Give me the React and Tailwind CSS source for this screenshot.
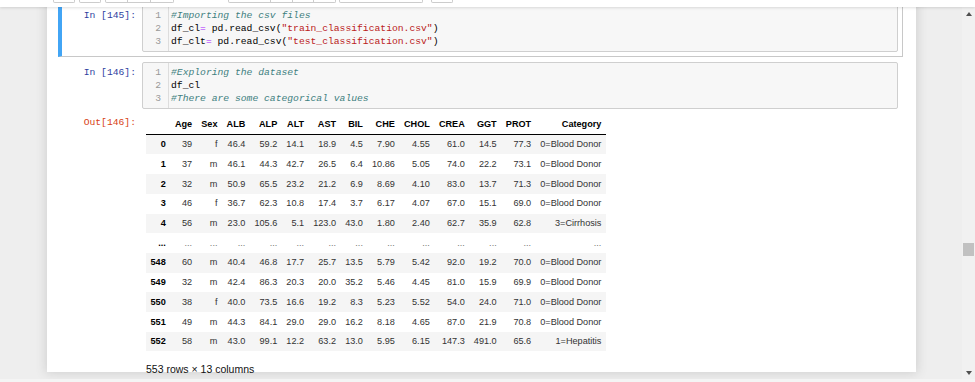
const toolbar = [
  { cls: "ml-[53px] w-[22px] rounded-b-[2px]" },
  { cls: "ml-[4px] w-[22px] rounded-b-[2px]" },
  { cls: "ml-[4px] w-[23px] rounded-bl-[2px]" },
  { cls: "-ml-px w-[24px]" },
  { cls: "-ml-px w-[24px] rounded-br-[2px]" },
  { cls: "ml-[54px] w-[43px] rounded-bl-[2px]" },
  { cls: "-ml-px w-[23px]" },
  { cls: "-ml-px w-[22px]" },
  { cls: "-ml-px w-[23px] rounded-br-[2px]" },
  { cls: "ml-[3px] w-[84px] rounded-b-[2px]" },
  { cls: "ml-[8px] w-[22px] rounded-b-[2px]" },
];

const columns = ["Age", "Sex", "ALB", "ALP", "ALT", "AST", "BIL", "CHE", "CHOL", "CREA", "GGT", "PROT", "Category"];

const rows = [
  ["0", "39", "f", "46.4", "59.2", "14.1", "18.9", "4.5", "7.90", "4.55", "61.0", "14.5", "77.3", "0=Blood Donor"],
  ["1", "37", "m", "46.1", "44.3", "42.7", "26.5", "6.4", "10.86", "5.05", "74.0", "22.2", "73.1", "0=Blood Donor"],
  ["2", "32", "m", "50.9", "65.5", "23.2", "21.2", "6.9", "8.69", "4.10", "83.0", "13.7", "71.3", "0=Blood Donor"],
  ["3", "46", "f", "36.7", "62.3", "10.8", "17.4", "3.7", "6.17", "4.07", "67.0", "15.1", "69.0", "0=Blood Donor"],
  ["4", "56", "m", "23.0", "105.6", "5.1", "123.0", "43.0", "1.80", "2.40", "62.7", "35.9", "62.8", "3=Cirrhosis"],
  ["...", "...", "...", "...", "...", "...", "...", "...", "...", "...", "...", "...", "...", "..."],
  ["548", "60", "m", "40.4", "46.8", "17.7", "25.7", "13.5", "5.79", "5.42", "92.0", "19.2", "70.0", "0=Blood Donor"],
  ["549", "32", "m", "42.4", "86.3", "20.3", "20.0", "35.2", "5.46", "4.45", "81.0", "15.9", "69.9", "0=Blood Donor"],
  ["550", "38", "f", "40.0", "73.5", "16.6", "19.2", "8.3", "5.23", "5.52", "54.0", "24.0", "71.0", "0=Blood Donor"],
  ["551", "49", "m", "44.3", "84.1", "29.0", "29.0", "16.2", "8.18", "4.65", "87.0", "21.9", "70.8", "0=Blood Donor"],
  ["552", "58", "m", "43.0", "99.1", "12.2", "63.2", "13.0", "5.95", "6.15", "147.3", "491.0", "65.6", "1=Hepatitis"],
];

// token colours follow the notebook's codemirror theme
const tok = {
  c: "text-[#408080] italic",
  o: "text-[#aa22ff]",
  s: "text-[#ba2121]",
  n: "text-[#000]",
};

const cell145 = [
  [["c", "#Importing the csv files"]],
  [["n", "df_cl"], ["o", "="], ["n", " pd.read_csv("], ["s", '"train_classification.csv"'], ["n", ")"]],
  [["n", "df_clt"], ["o", "="], ["n", " pd.read_csv("], ["s", '"test_classification.csv"'], ["n", ")"]],
];

const cell146 = [
  [["c", "#Exploring the dataset"]],
  [["n", "df_cl"]],
  [["c", "#There are some categorical values"]],
];

function CodeBox({ lines }) {
  return (
    <div className="flex-1 flex bg-[#f7f7f7] border border-[#cfcfcf] rounded-[2px] font-['Liberation_Mono',monospace] text-[9.7px] leading-[13px]">
      <div className="w-[26px] shrink-0 border-r border-[#dddddd] py-[3px] pr-[7px] text-right text-[#999999]">
        {lines.map((_, i) => (
          <div key={i}>{i + 1}</div>
        ))}
      </div>
      <div className="py-[3px] pl-[2px] whitespace-pre">
        {lines.map((line, i) => (
          <div key={i}>
            {line.map(([t, text], j) => (
              <span key={j} className={tok[t]}>
                {text}
              </span>
            ))}
          </div>
        ))}
      </div>
    </div>
  );
}

function InputRow({ n, lines }) {
  return (
    <div className="flex">
      <div className="w-[80px] shrink-0 pt-[4px] pr-[6px] text-right font-['Liberation_Mono',monospace] text-[9.7px] leading-[13px] text-[#303f9f]">
        In [{n}]:
      </div>
      <CodeBox lines={lines} />
    </div>
  );
}

function DataFrame() {
  return (
    <table className="border-collapse font-['Liberation_Sans',Arial,sans-serif] text-[9.15px] leading-[10.7px] text-black">
      <thead className="border-b border-black">
        <tr>
          <th className="px-[4.55px] py-[4.5px]"></th>
          {columns.map((c) => (
            <th key={c} className="px-[4.55px] py-[4.5px] text-right font-bold">
              {c}
            </th>
          ))}
        </tr>
      </thead>
      <tbody>
        {rows.map((r, i) => (
          <tr key={i} className={i % 2 === 0 ? "bg-[#f5f5f5]" : "bg-white"}>
            <th className="px-[4.55px] py-[4.5px] text-right font-bold">{r[0]}</th>
            {r.slice(1).map((v, j) => (
              <td key={j} className={"px-[4.55px] py-[4.5px] text-right whitespace-nowrap " + (v === "..." ? "text-[#777]" : "text-[#333]")}>
                {v}
              </td>
            ))}
          </tr>
        ))}
      </tbody>
    </table>
  );
}

function Arrow({ up }) {
  return (
    <div className="h-[13px] w-full flex items-center justify-center">
      <svg width="6" height="4" viewBox="0 0 6 4">
        <path d={up ? "M0 4 L3 0 L6 4 Z" : "M0 0 L3 4 L6 0 Z"} fill="#505050" />
      </svg>
    </div>
  );
}

export default function App() {
  return (
    <div className="w-[975px] h-[382px] overflow-hidden bg-[#eeeeee] flex flex-col font-['Liberation_Sans',Arial,sans-serif]">
      <div className="relative z-10 h-[7px] shrink-0 bg-white shadow-[0_1px_3px_rgba(0,0,0,0.13)] flex items-start">
        {toolbar.map((b, i) => (
          <div key={i} className={"h-[3px] border border-t-0 border-[#cccccc] bg-white " + b.cls} />
        ))}
      </div>

      <div className="flex flex-1 min-h-0">
        <div className="flex-1 min-w-0 overflow-hidden">
          <div className="ml-[47px] w-[869px] h-full bg-white shadow-[0_0_10px_1px_rgba(87,87,87,0.2)] pl-[11px] pr-[13px]">
            <div className="-mt-[7px] border border-[#c8c8c8] border-l-4 border-l-[#42a5f5] py-[4px] pr-[4px]">
              <InputRow n="145" lines={cell145} />
            </div>

            <div className="border border-transparent border-l-4 py-[4px] pr-[4px]">
              <InputRow n="146" lines={cell146} />
              <div className="flex mt-[1px]">
                <div className="w-[80px] shrink-0 pt-[6px] pr-[6px] text-right font-['Liberation_Mono',monospace] text-[9.7px] leading-[13px] text-[#d84315]">
                  Out[146]:
                </div>
                <div className="pl-[4px] pt-[4px]">
                  <DataFrame />
                  <p className="mt-[11px] text-[10.5px] leading-[14px] text-[#111]">553 rows × 13 columns</p>
                </div>
              </div>
            </div>
          </div>
        </div>

        <div className="w-[13px] shrink-0 bg-[#f1f1f1] flex flex-col items-center">
          <Arrow up />
          <div className="mt-[223px] w-[11px] h-[13px] bg-[#c1c1c1]" />
          <div className="flex-1" />
          <Arrow />
        </div>
      </div>

      <div className="h-[3px] shrink-0 bg-[#f4f4f4]" />
    </div>
  );
}
